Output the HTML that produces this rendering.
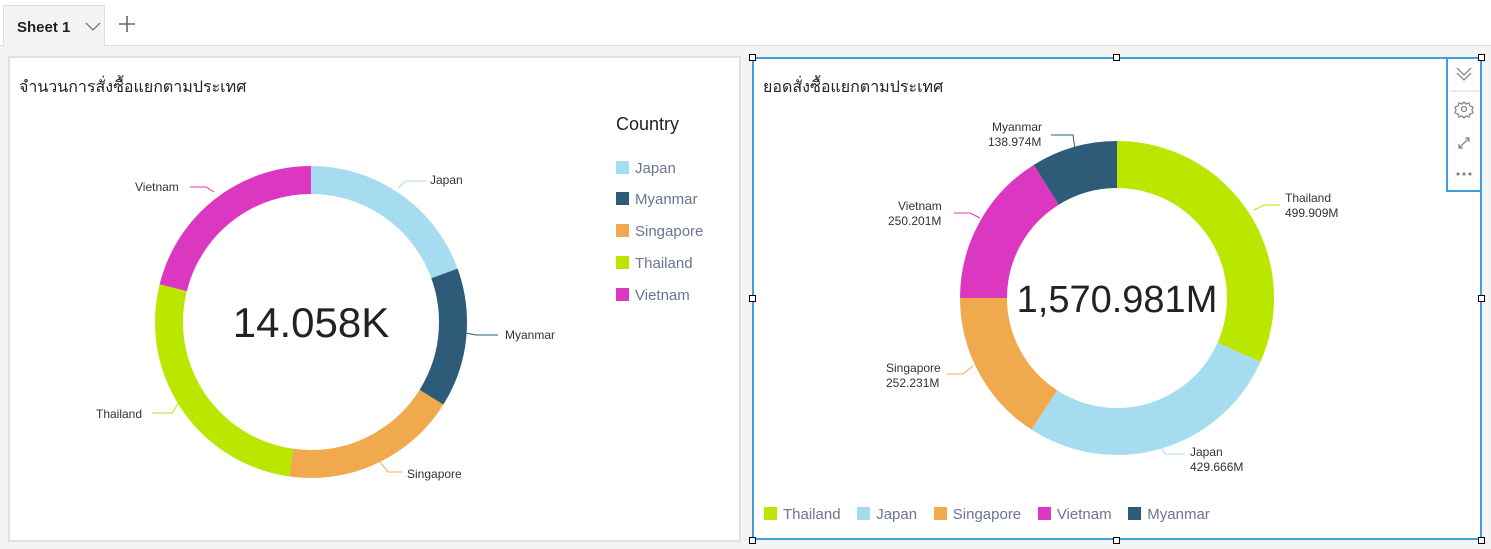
<!DOCTYPE html><html><head><meta charset="utf-8"><style>
body{margin:0;width:1491px;height:549px;background:#f4f4f4;font-family:"Liberation Sans","Noto Sans CJK SC",sans-serif;position:relative;overflow:hidden}
.top{position:absolute;left:0;top:0;width:1491px;height:45px;background:#fff;border-bottom:1px solid #ddd}
.tab{position:absolute;left:3px;top:5px;width:102px;height:41px;background:#f3f3f3;border:1px solid #ddd;border-bottom:none;box-sizing:border-box}
.p{position:absolute;background:#fff;box-sizing:border-box}
.h{position:absolute;width:7px;height:7px;background:#fff;border:1px solid #000;box-sizing:border-box}
svg text{font-family:"Liberation Sans",sans-serif}
.lg{position:absolute;font-size:15px;color:#6a7590}
.sw{display:inline-block;width:13px;height:13px;vertical-align:-1px;margin-right:6px}
</style></head><body>
<div class="top"></div>
<div class="tab"><span style="position:absolute;left:13px;top:13px;font-weight:bold;font-size:15px;color:#222">Sheet 1</span>
<svg style="position:absolute;left:80px;top:14px" width="18" height="12"><path d="M2 3l7 7 7-7" fill="none" stroke="#777" stroke-width="1.3"/></svg></div>
<svg style="position:absolute;left:118px;top:15px" width="18" height="18"><path d="M9 1v16M1 9h16" stroke="#666" stroke-width="1.6"/></svg>

<div class="p" style="left:8px;top:56px;width:733px;height:486px;border:2px solid #e0e0e0"></div>
<div class="p" style="left:752px;top:57px;width:730px;height:483px;border:2px solid #3f9fdb"></div>
<div style="position:absolute;left:19px;top:75px;font-size:16px;color:#222">จำนวนการสั่งซื้อแยกตามประเทศ</div>
<div style="position:absolute;left:763px;top:75px;font-size:16px;color:#222">ยอดสั่งซื้อแยกตามประเทศ</div>

<svg style="position:absolute;left:0;top:0" width="1491" height="549">
<g transform="rotate(-90 311 322)" fill="none" stroke-width="28">
<circle cx="311" cy="322" r="142" pathLength="360" stroke="#a6dcef" stroke-dasharray="70 290"/>
<circle cx="311" cy="322" r="142" pathLength="360" stroke="#2e5b78" stroke-dasharray="0 70 52 238"/>
<circle cx="311" cy="322" r="142" pathLength="360" stroke="#f0a94c" stroke-dasharray="0 122 66 172"/>
<circle cx="311" cy="322" r="142" pathLength="360" stroke="#bae600" stroke-dasharray="0 188 96 76"/>
<circle cx="311" cy="322" r="142" pathLength="360" stroke="#dc37c0" stroke-dasharray="0 284 76 0"/>
</g>
<text x="311" y="337" font-size="42" text-anchor="middle" fill="#222">14.058K</text>
<g fill="none" stroke-width="1">
<path d="M398 188l8-7h20" stroke="#a6dcef"/><path d="M466 333l10 2h22" stroke="#2e5b78"/>
<path d="M380 462l8 10h14" stroke="#f0a94c"/><path d="M182 398l-10 15h-20" stroke="#bae600"/>
<path d="M214 192l-8-5h-16" stroke="#dc37c0"/></g>
<g font-size="12" fill="#333"><text x="430" y="184">Japan</text><text x="505" y="339">Myanmar</text><text x="407" y="478">Singapore</text><text x="96" y="418">Thailand</text><text x="135" y="191">Vietnam</text></g>

<g transform="rotate(-90 1117 298)" fill="none" stroke-width="47">
<circle cx="1117" cy="298" r="133.5" pathLength="360" stroke="#bae600" stroke-dasharray="114 246"/>
<circle cx="1117" cy="298" r="133.5" pathLength="360" stroke="#a6dcef" stroke-dasharray="0 114 99 147"/>
<circle cx="1117" cy="298" r="133.5" pathLength="360" stroke="#f0a94c" stroke-dasharray="0 213 57 90"/>
<circle cx="1117" cy="298" r="133.5" pathLength="360" stroke="#dc37c0" stroke-dasharray="0 270 58 32"/>
<circle cx="1117" cy="298" r="133.5" pathLength="360" stroke="#2e5b78" stroke-dasharray="0 328 32 0"/>
</g>
<text x="1117" y="312" font-size="38" text-anchor="middle" fill="#222">1,570.981M</text>
<g fill="none"><path d="M1254 210l10-5h16" stroke="#bae600"/><path d="M1160 444l5 10h20" stroke="#a6dcef"/>
<path d="M973 366l-10 8h-16" stroke="#f0a94c"/><path d="M980 218l-10-5h-16" stroke="#dc37c0"/><path d="M1075 150l-2-15h-22" stroke="#2e5b78"/></g>
<g font-size="12" fill="#333"><text x="1285" y="202">Thailand</text><text x="1285" y="217">499.909M</text>
<text x="1190" y="456">Japan</text><text x="1190" y="471">429.666M</text>
<text x="886" y="372">Singapore</text><text x="886" y="387">252.231M</text>
<text x="898" y="210">Vietnam</text><text x="888" y="225">250.201M</text>
<text x="992" y="131">Myanmar</text><text x="988" y="146">138.974M</text></g>
</svg>

<div style="position:absolute;left:616px;top:114px;font-size:18px;color:#222">Country</div>
<div class="lg" style="left:616px;top:160px"><span class="sw" style="background:#a6dcef"></span>Japan</div>
<div class="lg" style="left:616px;top:191px"><span class="sw" style="background:#2e5b78"></span>Myanmar</div>
<div class="lg" style="left:616px;top:223px"><span class="sw" style="background:#f0a94c"></span>Singapore</div>
<div class="lg" style="left:616px;top:255px"><span class="sw" style="background:#bae600"></span>Thailand</div>
<div class="lg" style="left:616px;top:287px"><span class="sw" style="background:#dc37c0"></span>Vietnam</div>
<div class="lg" style="left:764px;top:506px;white-space:nowrap;word-spacing:0"><span class="sw" style="background:#bae600"></span>Thailand&nbsp;&nbsp;&nbsp;&nbsp;<span class="sw" style="background:#a6dcef"></span>Japan&nbsp;&nbsp;&nbsp;&nbsp;<span class="sw" style="background:#f0a94c"></span>Singapore&nbsp;&nbsp;&nbsp;&nbsp;<span class="sw" style="background:#dc37c0"></span>Vietnam&nbsp;&nbsp;&nbsp;&nbsp;<span class="sw" style="background:#2e5b78"></span>Myanmar</div>

<div style="position:absolute;left:1446px;top:57px;width:36px;height:135px;background:#fff;border:2px solid #3f9fdb;box-sizing:border-box"></div>
<svg style="position:absolute;left:1448px;top:59px" width="32" height="130" fill="none" stroke="#888" stroke-width="1.3">
<path d="M9 9l7 7 7-7M9 14l7 7 7-7"/><path d="M2 32h30" stroke="#ddd"/>
<circle cx="16" cy="50" r="2.5"/><path d="M16 43l2 2 3-1 1 3 3 1-1 3 1 3-3 1-1 3-3-1-2 2-2-2-3 1-1-3-3-1 1-3-1-3 3-1 1-3 3 1z"/>
<path d="M11 89l10-10M17 79h4v4M15 89h-4v-4"/>
<g fill="#888" stroke="none"><circle cx="10" cy="115" r="1.6"/><circle cx="16" cy="115" r="1.6"/><circle cx="22" cy="115" r="1.6"/></g></svg>

<div class="h" style="left:749px;top:54px"></div><div class="h" style="left:1113px;top:54px"></div><div class="h" style="left:1478px;top:54px"></div>
<div class="h" style="left:749px;top:295px"></div><div class="h" style="left:1478px;top:295px"></div>
<div class="h" style="left:749px;top:537px"></div><div class="h" style="left:1113px;top:537px"></div><div class="h" style="left:1478px;top:537px"></div>
</body></html>
